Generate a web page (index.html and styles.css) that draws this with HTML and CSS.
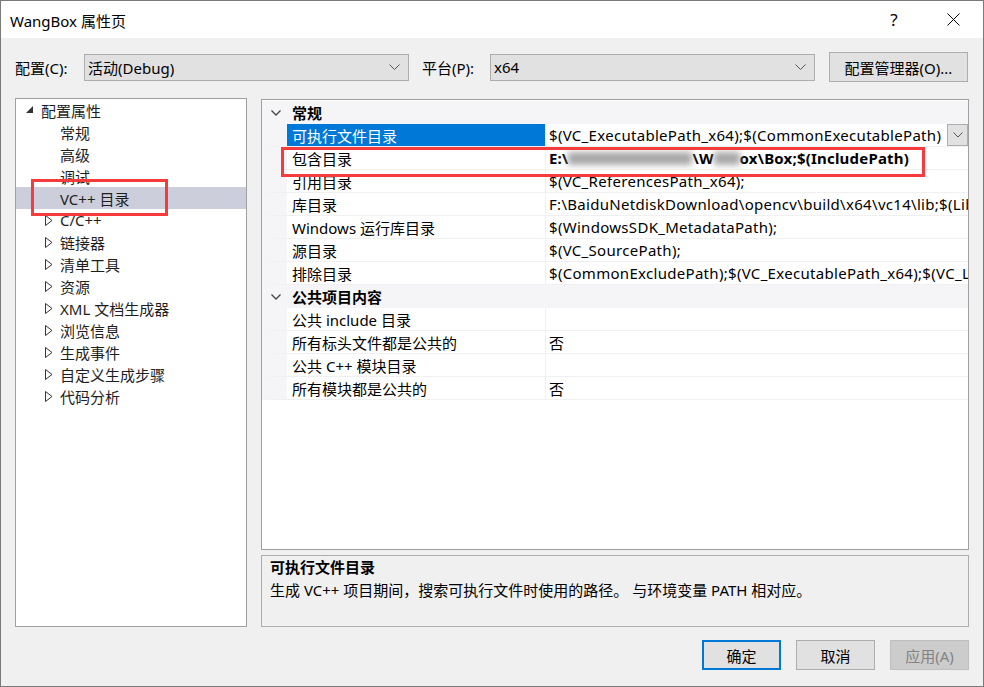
FILE: index.html
```html
<!DOCTYPE html>
<html lang="zh-CN">
<head>
    <meta charset="UTF-8">
    <title>WangBox 属性页</title>
    <link rel="stylesheet" href="styles.css">
</head>
<body>
<div class="dialog">
    <header class="titlebar">
        <span class="title">WangBox 属性页</span>
        <span class="help-btn">?</span>
        <span class="close-btn">
            <svg width="13" height="13" viewBox="0 0 13 13"><path d="M0.5 0.5L12.5 12.5M12.5 0.5L0.5 12.5" stroke="#000" stroke-width="1"/></svg>
        </span>
    </header>

    <main class="main">
        <div class="toolbar">
            <label class="tb-label">配置(C):</label>
            <div class="combo">
                <span>活动(Debug)</span>
                <svg class="chev" width="11" height="6" viewBox="0 0 11 6"><path d="M0.5 0.5L5.5 5.5L10.5 0.5" fill="none" stroke="#555" stroke-width="1"/></svg>
            </div>
            <label class="tb-label tb-label-2">平台(P):</label>
            <div class="combo">
                <span>x64</span>
                <svg class="chev" width="11" height="6" viewBox="0 0 11 6"><path d="M0.5 0.5L5.5 5.5L10.5 0.5" fill="none" stroke="#555" stroke-width="1"/></svg>
            </div>
            <button class="btn cfg-btn">配置管理器(O)...</button>
        </div>

        <div class="content">
            <div class="tree">
                <div class="tree-row root">
                    <span class="tree-icon">
                        <svg width="8" height="8" viewBox="0 0 8 8"><path d="M7 0L7 7L0 7Z" fill="#333"/></svg>
                    </span>
                    <span>配置属性</span>
                </div>
                <div class="tree-row child"><span class="tree-icon"></span><span>常规</span></div>
                <div class="tree-row child"><span class="tree-icon"></span><span>高级</span></div>
                <div class="tree-row child"><span class="tree-icon"></span><span>调试</span></div>
                <div class="tree-row child selected"><span class="tree-icon"></span><span>VC++ 目录</span></div>
                <div class="tree-row child"><span class="tree-icon"><svg width="8" height="11" viewBox="0 0 8 11"><path d="M0.5 0.5L7 5.5L0.5 10.5Z" fill="none" stroke="#333"/></svg></span><span>C/C++</span></div>
                <div class="tree-row child"><span class="tree-icon"><svg width="8" height="11" viewBox="0 0 8 11"><path d="M0.5 0.5L7 5.5L0.5 10.5Z" fill="none" stroke="#333"/></svg></span><span>链接器</span></div>
                <div class="tree-row child"><span class="tree-icon"><svg width="8" height="11" viewBox="0 0 8 11"><path d="M0.5 0.5L7 5.5L0.5 10.5Z" fill="none" stroke="#333"/></svg></span><span>清单工具</span></div>
                <div class="tree-row child"><span class="tree-icon"><svg width="8" height="11" viewBox="0 0 8 11"><path d="M0.5 0.5L7 5.5L0.5 10.5Z" fill="none" stroke="#333"/></svg></span><span>资源</span></div>
                <div class="tree-row child"><span class="tree-icon"><svg width="8" height="11" viewBox="0 0 8 11"><path d="M0.5 0.5L7 5.5L0.5 10.5Z" fill="none" stroke="#333"/></svg></span><span>XML 文档生成器</span></div>
                <div class="tree-row child"><span class="tree-icon"><svg width="8" height="11" viewBox="0 0 8 11"><path d="M0.5 0.5L7 5.5L0.5 10.5Z" fill="none" stroke="#333"/></svg></span><span>浏览信息</span></div>
                <div class="tree-row child"><span class="tree-icon"><svg width="8" height="11" viewBox="0 0 8 11"><path d="M0.5 0.5L7 5.5L0.5 10.5Z" fill="none" stroke="#333"/></svg></span><span>生成事件</span></div>
                <div class="tree-row child"><span class="tree-icon"><svg width="8" height="11" viewBox="0 0 8 11"><path d="M0.5 0.5L7 5.5L0.5 10.5Z" fill="none" stroke="#333"/></svg></span><span>自定义生成步骤</span></div>
                <div class="tree-row child"><span class="tree-icon"><svg width="8" height="11" viewBox="0 0 8 11"><path d="M0.5 0.5L7 5.5L0.5 10.5Z" fill="none" stroke="#333"/></svg></span><span>代码分析</span></div>

                <div class="mark mark-tree"></div>
            </div>

            <div class="right-col">
                <div class="grid">
                    <div class="cat-row">
                        <span class="cat-icon"><svg width="10" height="6" viewBox="0 0 10 6"><path d="M0.5 0.5L5 5L9.5 0.5" fill="none" stroke="#444" stroke-width="1.3"/></svg></span>
                        <span class="cat-name">常规</span>
                    </div>
                    <div class="prop-row active">
                        <span class="prop-name">可执行文件目录</span>
                        <span class="prop-value">$(VC_ExecutablePath_x64);$(CommonExecutablePath)
                            <span class="drop-btn"><svg width="10" height="6" viewBox="0 0 10 6"><path d="M0.5 0.5L5 5L9.5 0.5" fill="none" stroke="#555" stroke-width="1"/></svg></span>
                        </span>
                    </div>
                    <div class="prop-row">
                        <span class="prop-name">包含目录</span>
                        <span class="prop-value bold">E:\<span class="smudge smudge-a"></span>\W<span class="smudge smudge-b"></span>ox\Box;$(IncludePath)</span>
                    </div>
                    <div class="prop-row">
                        <span class="prop-name">引用目录</span>
                        <span class="prop-value">$(VC_ReferencesPath_x64);</span>
                    </div>
                    <div class="prop-row">
                        <span class="prop-name">库目录</span>
                        <span class="prop-value">F:\BaiduNetdiskDownload\opencv\build\x64\vc14\lib;$(LibraryPath_x64)</span>
                    </div>
                    <div class="prop-row">
                        <span class="prop-name">Windows 运行库目录</span>
                        <span class="prop-value">$(WindowsSDK_MetadataPath);</span>
                    </div>
                    <div class="prop-row">
                        <span class="prop-name">源目录</span>
                        <span class="prop-value">$(VC_SourcePath);</span>
                    </div>
                    <div class="prop-row">
                        <span class="prop-name">排除目录</span>
                        <span class="prop-value">$(CommonExcludePath);$(VC_ExecutablePath_x64);$(VC_LibraryPath_x64)</span>
                    </div>
                    <div class="cat-row">
                        <span class="cat-icon"><svg width="10" height="6" viewBox="0 0 10 6"><path d="M0.5 0.5L5 5L9.5 0.5" fill="none" stroke="#444" stroke-width="1.3"/></svg></span>
                        <span class="cat-name">公共项目内容</span>
                    </div>
                    <div class="prop-row">
                        <span class="prop-name">公共 include 目录</span>
                        <span class="prop-value"></span>
                    </div>
                    <div class="prop-row">
                        <span class="prop-name">所有标头文件都是公共的</span>
                        <span class="prop-value">否</span>
                    </div>
                    <div class="prop-row">
                        <span class="prop-name">公共 C++ 模块目录</span>
                        <span class="prop-value"></span>
                    </div>
                    <div class="prop-row">
                        <span class="prop-name">所有模块都是公共的</span>
                        <span class="prop-value">否</span>
                    </div>

                    <div class="mark mark-grid"></div>
                </div>

                <div class="desc">
                    <div class="desc-title">可执行文件目录</div>
                    <div class="desc-text">生成 VC++ 项目期间，搜索可执行文件时使用的路径。 与环境变量 PATH 相对应。</div>
                </div>
            </div>
        </div>

        <div class="footer">
            <button class="btn footer-btn default">确定</button>
            <button class="btn footer-btn">取消</button>
            <button class="btn footer-btn disabled">应用(A)</button>
        </div>
    </main>
</div>
</body>
</html>
```

FILE: styles.css
```css
:root {
    --bg: #f0f0f0;
    --border: #adadad;
    --ctrl: #e1e1e1;
    --blue: #0078d7;
    --mark: #f53b3b;
    --line: #f0f0f0;
}

* {
    margin: 0;
    padding: 0;
    box-sizing: border-box;
}

body {
    font-family: "Noto Sans", "Noto Sans CJK SC", sans-serif;
    font-size: 15px;
    color: #000;
    background: var(--bg);
}

.dialog {
    width: 984px;
    height: 687px;
    border: 1px solid #7a7a7a;
    display: flex;
    flex-direction: column;
    overflow: hidden;
}

.titlebar {
    height: 37px;
    background: #fff;
    display: flex;
    align-items: center;
    padding-left: 9px;
    flex-shrink: 0;
}

.title {
    flex: 1;
    padding-top: 1px;
}

.help-btn {
    font-size: 17px;
    width: 58px;
    text-align: center;
    margin-right: 1px;
}

.close-btn {
    width: 58px;
    display: flex;
    justify-content: center;
    margin-right: 1px;
}

.main {
    flex: 1;
    padding: 14px 14px 0 14px;
    display: flex;
    flex-direction: column;
}

.toolbar {
    display: flex;
    align-items: center;
    height: 30px;
}

.tb-label {
    width: 69px;
    flex-shrink: 0;
}

.tb-label-2 {
    width: 68px;
    margin-left: 13px;
}

.combo {
    width: 325px;
    flex-shrink: 0;
    height: 27px;
    background: var(--ctrl);
    border: 1px solid var(--border);
    display: flex;
    align-items: center;
    justify-content: space-between;
    padding: 0 8px 0 3px;
}

.btn {
    font-family: inherit;
    font-size: 15px;
    background: var(--ctrl);
    border: 1px solid var(--border);
    color: #000;
}

.cfg-btn {
    width: 139px;
    height: 30px;
    margin-left: 14px;
    flex-shrink: 0;
}

.content {
    display: flex;
    gap: 14px;
    margin-top: 16px;
    height: 529px;
}

.tree {
    position: relative;
    width: 232px;
    flex-shrink: 0;
    background: #fff;
    border: 1px solid #a0a0a0;
}

.tree-row {
    height: 22px;
    display: flex;
    align-items: center;
    color: #1e1e1e;
    white-space: nowrap;
}

.tree-row.root {
    padding-left: 8px;
}

.tree-row.child {
    padding-left: 27px;
}

.tree-row.selected {
    background: #cccedb;
}

.tree-icon {
    width: 17px;
    flex-shrink: 0;
    display: flex;
    align-items: center;
    padding-left: 2px;
}

.mark {
    position: absolute;
    border: 3px solid var(--mark);
}

.mark-tree {
    left: 15px;
    top: 80px;
    width: 137px;
    height: 37px;
}

.right-col {
    flex: 1;
    min-width: 0;
    display: flex;
    flex-direction: column;
    gap: 5px;
}

.grid {
    position: relative;
    height: 451px;
    background: #fff;
    border: 1px solid #a0a0a0;
    padding-top: 1px;
    margin-top: 1px;
    overflow: hidden;
}

.cat-row {
    height: 23px;
    display: flex;
    align-items: center;
    background: #f5f5f7;
    font-weight: bold;
}

.cat-icon {
    width: 25px;
    display: flex;
    justify-content: center;
    padding-left: 2px;
}

.cat-name {
    padding-left: 5px;
}

.prop-row {
    height: 23px;
    display: flex;
    border-left: 25px solid #f5f5f7;
    border-bottom: 1px solid var(--line);
}

.prop-name {
    width: 259px;
    flex-shrink: 0;
    padding-left: 5px;
    display: flex;
    align-items: center;
    border-right: 1px solid var(--line);
    white-space: nowrap;
}

.prop-value {
    flex: 1;
    min-width: 0;
    padding-left: 3px;
    display: flex;
    align-items: center;
    white-space: nowrap;
    overflow: hidden;
    position: relative;
    letter-spacing: 0.3px;
}

.prop-value.bold {
    font-weight: bold;
    letter-spacing: 0.2px;
}

.prop-row.active .prop-name {
    background: var(--blue);
    color: #fff;
}

.drop-btn {
    position: absolute;
    right: 0;
    top: 0;
    width: 21px;
    height: 22px;
    background: var(--ctrl);
    border: 1px solid var(--border);
    display: flex;
    align-items: center;
    justify-content: center;
}

.smudge {
    display: inline-block;
    background: #a8a8a8;
    filter: blur(3px);
    height: 13px;
    flex-shrink: 0;
}

.smudge-a {
    width: 124px;
}

.smudge-b {
    width: 26px;
}

.mark-grid {
    left: 19px;
    top: 47px;
    width: 644px;
    height: 30px;
}

.desc {
    flex: 1;
    border: 1px solid var(--border);
    background: var(--bg);
    padding: 0 8px;
}

.desc-title {
    font-weight: bold;
    line-height: 23px;
}

.desc-text {
    line-height: 23px;
}

.footer {
    display: flex;
    justify-content: flex-end;
    gap: 15px;
    margin-top: 13px;
}

.footer-btn {
    width: 79px;
    height: 30px;
}

.footer-btn.default {
    border: 2px solid var(--blue);
}

.footer-btn.disabled {
    background: #cccccc;
    border-color: #bfbfbf;
    color: #838383;
}
```
